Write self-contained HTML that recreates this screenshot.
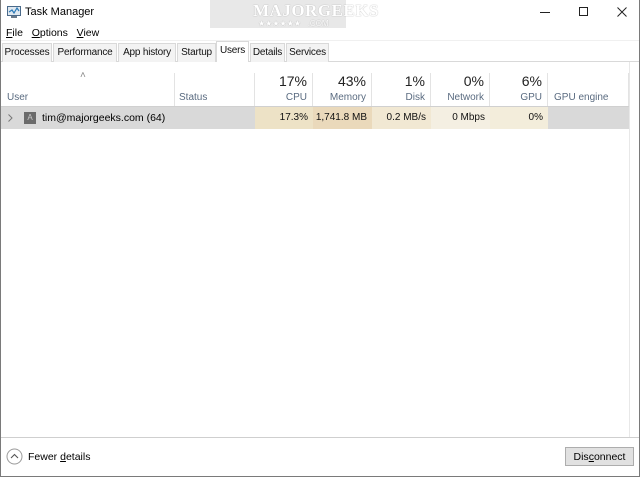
<!DOCTYPE html>
<html><head><style>
*{margin:0;padding:0;box-sizing:border-box}
body{width:640px;height:477px;overflow:hidden;background:#fff;font-family:"Liberation Sans",sans-serif;font-size:11px;color:#000;position:relative}
.abs{position:absolute}
.win{position:absolute;left:0;top:0;width:640px;height:477px;border:1px solid #7a7a7a;border-top:none}
.tab{position:absolute;top:43px;height:19px;border:1px solid #d9d9d9;border-bottom:none;background:#f3f3f3;padding:3px 0 0 0;text-align:center;font-size:10px;color:#111;letter-spacing:-0.2px;white-space:nowrap}
.col{position:absolute;top:73px;height:34px;border-right:1px solid #e3e3e3;text-align:right;padding-right:5px}
.pct{font-size:14px;color:#222;position:absolute;right:5px;top:0}
.lbl{font-size:10px;color:#5a6b80;position:absolute;right:5px;top:19px}
.cell{position:absolute;top:107px;height:22px;text-align:right;padding:5px 5px 0 0;font-size:10px;color:#111}
</style></head><body>
<div class="win"></div>
<svg class="abs" style="left:7px;top:6px" width="14" height="13" viewBox="0 0 14 13"><rect x="0.5" y="0.5" width="13" height="9" fill="#dfe8f0" stroke="#4a6a8a"/><polyline points="2,6 5,4 7,7 10,2 12,5" fill="none" stroke="#2a7ab8" stroke-width="1.2"/><rect x="4" y="10" width="6" height="2" fill="#6a7a8a"/></svg>
<div class="abs" style="left:25px;top:6px;font-size:11px">Task Manager</div>
<div class="abs" style="left:210px;top:0;width:136px;height:28px;background:#e8e8e8"></div>
<div class="abs" style="left:253px;top:1px;font-family:'Liberation Serif',serif;font-weight:bold;font-size:17px;color:#fff;letter-spacing:0.5px;text-shadow:0 0 1px #999">MAJORGEEKS</div>
<div class="abs" style="left:258px;top:19px;font-size:8px;color:#fff;text-shadow:0 0 1px #999">★★★★★★ &nbsp; .COM</div>
<div class="abs" style="left:540px;top:12px;width:10px;height:1px;background:#222"></div>
<div class="abs" style="left:579px;top:7px;width:9px;height:9px;border:1px solid #222"></div>
<svg class="abs" style="left:617px;top:7px" width="10" height="10" viewBox="0 0 10 10"><path d="M0.5 0.5L9.5 9.5M9.5 0.5L0.5 9.5" stroke="#222" stroke-width="1"/></svg>
<div class="abs" style="left:6px;top:27px;font-size:10.5px"><u>F</u>ile &nbsp;&nbsp;<u>O</u>ptions &nbsp;&nbsp;<u>V</u>iew</div>
<div class="abs" style="left:1px;top:40px;width:638px;height:1px;background:#f0f0f0"></div>
<div class="abs" style="left:1px;top:61px;width:638px;height:1px;background:#d9d9d9"></div>
<div class="tab" style="left:2px;width:50px">Processes</div>
<div class="tab" style="left:53px;width:64px">Performance</div>
<div class="tab" style="left:118px;width:58px">App history</div>
<div class="tab" style="left:177px;width:39px">Startup</div>
<div class="tab" style="left:216px;width:33px;top:41px;height:21px;background:#fff">Users</div>
<div class="tab" style="left:250px;width:35px">Details</div>
<div class="tab" style="left:286px;width:43px">Services</div>
<div class="abs" style="left:80px;top:70px;font-size:10px;color:#888">&#x2c4;</div>
<div class="col" style="left:1px;width:174px"><div class="lbl" style="left:6px;right:auto">User</div></div>
<div class="col" style="left:175px;width:80px"><div class="lbl" style="left:4px;right:auto">Status</div></div>
<div class="col" style="left:255px;width:58px"><div class="pct">17%</div><div class="lbl">CPU</div></div>
<div class="col" style="left:313px;width:59px"><div class="pct">43%</div><div class="lbl">Memory</div></div>
<div class="col" style="left:372px;width:59px"><div class="pct">1%</div><div class="lbl">Disk</div></div>
<div class="col" style="left:431px;width:59px"><div class="pct">0%</div><div class="lbl">Network</div></div>
<div class="col" style="left:490px;width:58px"><div class="pct">6%</div><div class="lbl">GPU</div></div>
<div class="col" style="left:548px;width:81px"><div class="lbl" style="left:6px;right:auto">GPU engine</div></div>
<div class="abs" style="left:1px;top:106px;width:628px;height:1px;background:#d0d0d0"></div>
<div class="abs" style="left:1px;top:107px;width:254px;height:22px;background:#d9d9d9"></div>
<svg class="abs" style="left:8px;top:114px" width="5" height="8" viewBox="0 0 5 8"><path d="M0.5 0.5L4 4L0.5 7.5" fill="none" stroke="#777"/></svg>
<div class="abs" style="left:24px;top:112px;width:12px;height:12px;background:#6b6b6b;color:#ccc;font-size:8px;text-align:center;line-height:12px">A</div>
<div class="abs" style="left:42px;top:112px;font-size:10.5px">tim@majorgeeks.com (64)</div>
<div class="cell" style="left:255px;width:58px;background:#ede2c6">17.3%</div>
<div class="cell" style="left:313px;width:59px;background:#ead9bb">1,741.8 MB</div>
<div class="cell" style="left:372px;width:59px;background:#f1e8d3">0.2 MB/s</div>
<div class="cell" style="left:431px;width:59px;background:#f4efe2">0 Mbps</div>
<div class="cell" style="left:490px;width:58px;background:#f3eddb">0%</div>
<div class="cell" style="left:548px;width:81px;background:#d9d9d9"></div>
<div class="abs" style="left:629px;top:62px;width:1px;height:375px;background:#e8e8e8"></div>
<div class="abs" style="left:1px;top:437px;width:638px;height:1px;background:#cfcfcf"></div>
<svg class="abs" style="left:6px;top:448px" width="17" height="17" viewBox="0 0 17 17"><circle cx="8.5" cy="8.5" r="7.5" fill="#fff" stroke="#9a9a9a"/><polyline points="5,10 8.5,6.5 12,10" fill="none" stroke="#555" stroke-width="1.1"/></svg>
<div class="abs" style="left:28px;top:451px;font-size:10.5px">Fewer <u>d</u>etails</div>
<div class="abs" style="left:565px;top:447px;width:69px;height:19px;background:#e1e1e1;border:1px solid #adadad;text-align:center;font-size:10.5px;padding-top:3px">Dis<u>c</u>onnect</div>
</body></html>
